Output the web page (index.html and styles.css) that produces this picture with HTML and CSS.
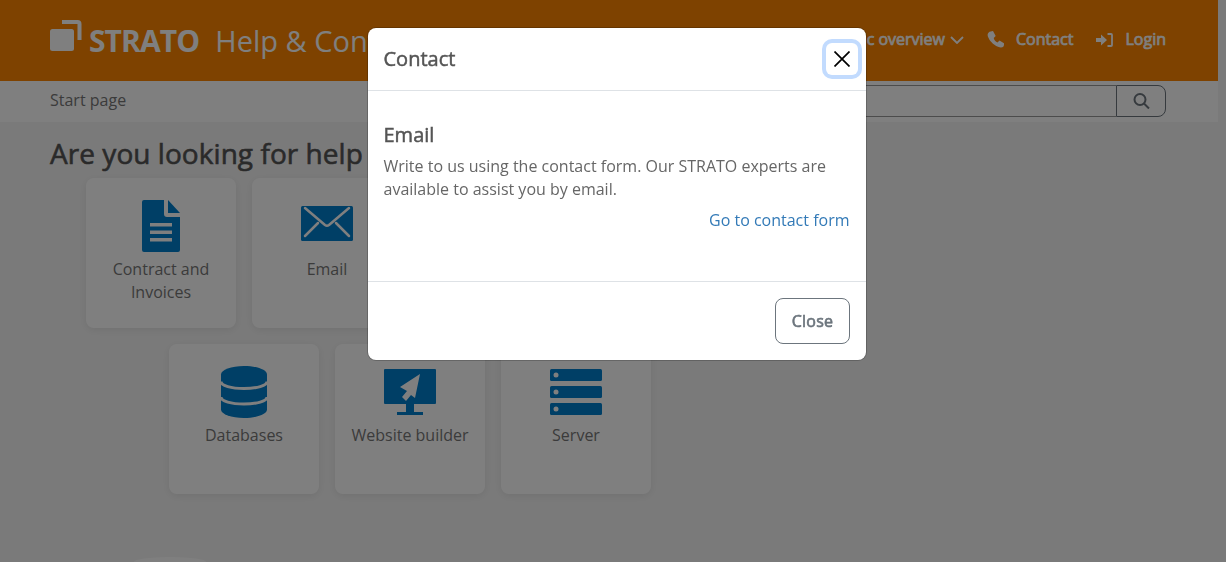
FILE: index.html
```html
<!DOCTYPE html>
<html lang="en">
<head>
<meta charset="utf-8">
<title>STRATO Help &amp; Contact</title>
<link rel="stylesheet" href="styles.css">
</head>
<body>
<div class="page">
  <header class="topbar">
    <a class="brand">
      <svg class="brand-mark" width="32" height="32" viewBox="0 0 32 32"><rect x="0" y="9" width="24" height="22" rx="2.500"/><path class="brand-corner" d="M12 2h15.500a2 2 0 0 1 2 2v16"/></svg>
      <span class="brand-name">STRATO</span>
      <span class="brand-sub">Help &amp; Contact</span>
    </a>
    <nav class="topnav">
      <a class="topnav-item">Topic overview
        <svg class="chev" width="14" height="8" viewBox="0 0 14 8"><path d="M1 1l6 6 6-6"/></svg>
      </a>
      <a class="topnav-item spaced">
        <svg width="17" height="17" viewBox="0 0 17 17"><path d="M2.500.800 6 0l2.700 5-2 2c.5 2 1.800 3.500 3.800 4.600l2-2 5 2.900-1 3c-1.200 1.200-3.300 1.300-5.500.2C6 13.700 2.300 9.500.8 5.200.3 3.500 1 1.800 2.500.8z"/></svg>
        Contact</a>
      <a class="topnav-item spaced">
        <svg width="17" height="14" viewBox="0 0 17 14"><path d="M0 5h5V1.500L11 7l-6 5.500V9H0z"/><path class="login-bracket" d="M11.500 1H15a1 1 0 0 1 1 1v10a1 1 0 0 1-1 1h-3.500"/></svg>
        Login</a>
    </nav>
  </header>

  <div class="crumbbar">
    <span class="crumb">Start page</span>
    <form class="search">
      <input class="search-input" type="text" aria-label="Search">
      <button class="search-btn" type="button" aria-label="Search">
        <svg width="17" height="16" viewBox="0 0 17 16"><circle cx="7" cy="6.500" r="5.500"/><path d="M11 10.500l5 5"/></svg>
      </button>
    </form>
  </div>

  <main class="main">
    <h1 class="headline">Are you looking for help with a topic?</h1>
    <div class="cards">
      <a class="card">
        <svg class="card-icon" viewBox="0 0 52 52"><path d="M9 0h20v14a3 3 0 0 0 3 3h13v33a2 2 0 0 1-2 2H9a2 2 0 0 1-2-2V2a2 2 0 0 1 2-2z"/><path d="M33 0l12 13H33z"/><path class="cut" d="M15 23h22v3.500H15zM15 30.500h22V34H15zM15 38h22v3.500H15z"/></svg>
        <span class="card-label">Contract and Invoices</span>
      </a>
      <a class="card">
        <svg class="card-icon" viewBox="0 0 52 52"><rect x="0" y="6" width="52" height="35" rx="1.500"/><path class="cut-line" d="M4 8l20 17q2 1.500 4 0L48 8M4 36l13-13M48 36L35 23"/></svg>
        <span class="card-label">Email</span>
      </a>
      <a class="card"></a>
      <a class="card"></a>
      <a class="card">
        <svg class="card-icon" viewBox="0 0 52 52"><path d="M3 8.500C3 3.800 13.300 0 26 0s23 3.800 23 8.500v35c0 4.700-10.300 8.500-23 8.500S3 48.200 3 43.500z"/><path class="cut-arc" d="M3 15.500c0 4.200 10.300 7 23 7s23-2.800 23-7M3 31c0 4.200 10.300 7 23 7s23-2.800 23-7"/></svg>
        <span class="card-label">Databases</span>
      </a>
      <a class="card">
        <svg class="card-icon" viewBox="0 0 52 52"><path d="M1 3h50a1 1 0 0 1 1 1v33a1 1 0 0 1-1 1H1a1 1 0 0 1-1-1V4a1 1 0 0 1 1-1z"/><path d="M22 38h8v8h9v3H13v-3h9z"/><path class="cut" d="M36 8 16 21l7 4-5 6 4 4 5-6 4 3z"/></svg>
        <span class="card-label">Website builder</span>
      </a>
      <a class="card">
        <svg class="card-icon" viewBox="0 0 52 52"><rect x="0" y="3" width="52" height="12" rx="1.500"/><rect x="0" y="20" width="52" height="12" rx="1.500"/><rect x="0" y="37" width="52" height="12" rx="1.500"/><circle class="cut" cx="6" cy="9" r="2.500"/><circle class="cut" cx="6" cy="26" r="2.500"/><circle class="cut" cx="6" cy="43" r="2.500"/></svg>
        <span class="card-label">Server</span>
      </a>
    </div>
    <div class="round-badge"></div>
  </main>
</div>

<div class="backdrop"></div>

<div class="modal" role="dialog" aria-label="Contact">
  <div class="modal-head">
    <h5 class="modal-title">Contact</h5>
    <button class="modal-x" type="button" aria-label="Close">
      <svg width="16" height="16" viewBox="0 0 16 16"><path d="M.5.500l15 15M15.500.500l-15 15"/></svg>
    </button>
  </div>
  <div class="modal-body">
    <h5 class="modal-sub">Email</h5>
    <p class="modal-text">Write to us using the contact form. Our STRATO experts are available to assist you by email.</p>
    <p class="modal-link"><a>Go to contact form</a></p>
  </div>
  <div class="modal-foot">
    <button class="btn-close-text" type="button">Close</button>
  </div>
</div>
</body>
</html>
```
FILE: styles.css
```css
* { box-sizing: border-box; }
html, body { margin: 0; padding: 0; height: 562px; overflow: hidden; background: #f5f5f5; }
body { font-family: "Open Sans", "Liberation Sans", sans-serif; font-size: 16px; line-height: 23px; color: #666; }
.page { width: 1218px; height: 562px; overflow: hidden; }

.topbar { height: 81px; background: #fc8500; color: #fff; padding: 0 52px 0 50px; display: flex; align-items: center; justify-content: space-between; }
.brand { display: flex; align-items: center; }
.brand-mark { fill: #fff; margin-right: 7px; margin-top: -9px; }
.brand-corner { fill: none; stroke: #fff; stroke-width: 4; }
.brand-name { font-size: 30px; font-weight: 700; letter-spacing: -.9px; line-height: 36px; margin-top: 1px; }
.brand-sub { font-size: 29px; font-weight: 400; line-height: 36px; margin-left: 16px; margin-top: 1px; white-space: nowrap; }
.topnav { display: flex; align-items: center; gap: 23px; margin-top: -2px; font-weight: 400; -webkit-text-stroke: .7px #fff; }
.topnav-item { display: flex; align-items: center; gap: 5px; white-space: nowrap; }
.topnav-item.spaced { gap: 12px; }
.topnav-item svg { fill: #fff; -webkit-text-stroke: 0; }
.chev { fill: none !important; stroke: #fff; stroke-width: 1.8; }
.login-bracket { fill: none; stroke: #fff; stroke-width: 1.800; }

.crumbbar { height: 41px; background: #fff; padding: 4px 52px 0 50px; display: flex; align-items: flex-start; justify-content: space-between; }
.crumb { color: #777; margin-top: 4px; }
.search { display: flex; height: 32px; }
.search-input { width: 500px; height: 32px; border: 1px solid #999; border-right: 0; border-radius: 6px 0 0 6px; background: #fff; padding: 0 8px; }
.search-btn { width: 50px; height: 32px; padding: 0; display: flex; align-items: center; justify-content: center; border: 1px solid #6c757d; border-radius: 0 8px 8px 0; background: #fff; }
.search-btn svg { fill: none; stroke: #6c757d; stroke-width: 2; }

.main { padding: 0 0 0 50px; }
.headline { margin: 14px 0 8px; font-size: 28px; line-height: 34px; font-weight: 400; letter-spacing: .05px; -webkit-text-stroke: .6px #555; color: #555; white-space: nowrap; }
.cards { width: 720px; display: flex; flex-wrap: wrap; justify-content: center; gap: 16px; }
.card { width: 150px; height: 150px; background: #fff; border-radius: 8px; box-shadow: 0 2px 8px rgba(0,0,0,.08); padding: 22px 12px 0; display: flex; flex-direction: column; align-items: center; text-align: center; color: #777; }
.card-icon { width: 52px; height: 52px; fill: #007ecc; flex: none; margin-bottom: 6px; }
.card-label { display: block; }
.cut { fill: #fff; }
.cut-line { fill: none; stroke: #fff; stroke-width: 2.500; stroke-linecap: round; stroke-linejoin: round; }
.cut-arc { fill: none; stroke: #fff; stroke-width: 3; }
.round-badge { width: 72px; height: 5px; margin: 63px 0 0 84px; border-radius: 36px 36px 0 0 / 5px 5px 0 0; background: #fff; }

.backdrop { position: fixed; inset: 0; background: rgba(0,0,0,.5); }

.modal { position: fixed; left: 368px; top: 28px; width: 498px; height: 332px; background: #fff; border-radius: 8px; color: #666; box-shadow: 0 0 0 1px rgba(0,0,0,.2); }
.modal-head { height: 63px; padding: 16px 8px 16px 15.500px; display: flex; align-items: center; justify-content: space-between; border-bottom: 1px solid #dee2e6; }
.modal-title { margin: 0; font-size: 20px; line-height: 30px; font-weight: 400; -webkit-text-stroke: .5px #555; color: #555; }
.modal-x { width: 32px; height: 32px; padding: 0; display: flex; align-items: center; justify-content: center; background: #fff; border: 0; border-radius: 6px; box-shadow: 0 0 0 4px #c2dbfe; }
.modal-x svg { stroke: #000; stroke-width: 1.700; fill: none; }
.modal-body { height: 190px; padding: 32px 16.500px 0 15.500px; }
.modal-sub { margin: 0 0 8px; font-size: 20px; line-height: 24px; font-weight: 400; -webkit-text-stroke: .5px #555; color: #555; }
.modal-text { margin: 0 0 8px; }
.modal-link { margin: 0; text-align: right; color: #337ab7; }
.modal-foot { border-top: 1px solid #dee2e6; padding: 16px; display: flex; justify-content: flex-end; }
.btn-close-text { height: 46px; width: 75px; padding: 0; background: #fff; border: 1px solid #6c757d; border-radius: 8px; color: #6c757d; font: 400 16px/23px "Open Sans", "Liberation Sans", sans-serif; -webkit-text-stroke: .65px #6c757d; letter-spacing: .2px; }
```
